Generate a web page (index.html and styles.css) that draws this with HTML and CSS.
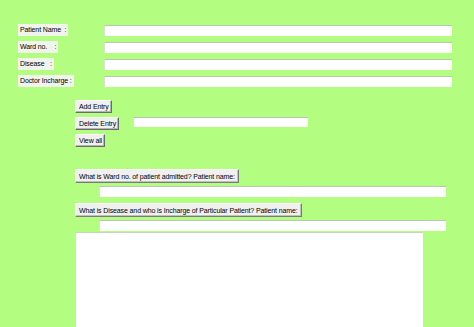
FILE: index.html
```html
<!DOCTYPE html>
<html>
<head>
<meta charset="utf-8">
<link rel="stylesheet" href="styles.css">
</head>
<body>
<div class="app">
  <div class="form">
    <span class="label">Patient Name  :</span><input class="entry" type="text">
    <span class="label">Ward no.    :</span><input class="entry" type="text">
    <span class="label">Disease   :</span><input class="entry" type="text">
    <span class="label">Doctor Incharge :</span><input class="entry" type="text">
  </div>
  <div class="actions">
    <button class="btn">Add Entry</button>
    <div class="del-row">
      <button class="btn">Delete Entry</button>
      <input class="entry del-entry" type="text">
    </div>
    <button class="btn">View all</button>
  </div>
  <div class="query">
    <span class="qlabel">What is Ward no. of patient admitted? Patient name:</span>
    <input class="entry qentry" type="text">
    <span class="qlabel second">What is Disease and who is Incharge of Particular Patient? Patient name:</span>
    <input class="entry qentry" type="text">
    <textarea class="output"></textarea>
  </div>
</div>
</body>
</html>
```
FILE: styles.css
```css
html, body {
  margin: 0;
  padding: 0;
  background: #b3fe80;
  overflow: hidden;
}
body {
  font-family: "Liberation Sans", Arial, sans-serif;
  font-size: 7px;
  letter-spacing: -0.12px;
  color: #000;
}
.app {
  padding-top: 24px;
  height: 327px;
  box-sizing: border-box;
}
.form {
  margin-left: 18px;
  display: grid;
  grid-template-columns: 86px 348px;
  grid-auto-rows: 12px;
  row-gap: 5px;
}
.label {
  justify-self: start;
  background: #f0f4ec;
  height: 12px;
  line-height: 12px;
  padding: 0 2px;
  white-space: pre;
}
.entry {
  display: block;
  box-sizing: border-box;
  margin: 0;
  padding: 0;
  background: #fff;
  border: none;
  border-top: 1px solid #b8c8ae;
  border-left: 1px solid #d8e4d0;
  height: 11px;
  outline: none;
}
.form .entry {
  align-self: center;
  width: 348px;
}
.actions {
  margin-top: 13px;
  margin-left: 75px;
  display: flex;
  flex-direction: column;
  align-items: flex-start;
  gap: 4px;
}
.del-row {
  display: flex;
  align-items: flex-start;
  gap: 14px;
}
.del-entry {
  width: 175px;
  height: 10px;
}
.btn {
  font-family: inherit;
  font-size: 7px;
  letter-spacing: -0.12px;
  color: #000;
  height: 13px;
  padding: 0 2px 0 3px;
  margin: 0;
  background: #f0f0f0;
  border: 1px solid;
  border-color: #ffffff #6b6b6b #6b6b6b #ffffff;
  box-shadow: inset -1px -1px 0 #b4b4b4;
  line-height: 11px;
}
.query {
  margin-top: 22px;
  margin-left: 75px;
  display: flex;
  flex-direction: column;
  align-items: flex-start;
}
.qlabel {
  height: 14px;
  line-height: 13px;
  box-sizing: border-box;
  padding: 0 3px;
  background: #f0f0f0;
  border: 1px solid;
  border-color: #ffffff #7a7a7a #7a7a7a #ffffff;
  box-shadow: inset -1px -1px 0 #c0c0c0;
}
.qlabel.second {
  margin-top: 6px;
}
.qentry {
  margin-top: 3px;
  margin-left: 24px;
  width: 347px;
}
.output {
  display: block;
  margin: 1px 0 0 1px;
  width: 347px;
  height: 100px;
  box-sizing: border-box;
  border: none;
  border-top: 1px solid #c8d4c0;
  background: #fff;
  resize: none;
  padding: 0;
  outline: none;
}
```
